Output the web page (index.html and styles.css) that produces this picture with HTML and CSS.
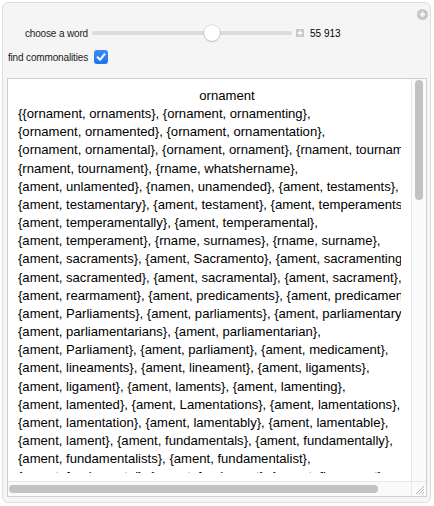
FILE: index.html
```html
<!DOCTYPE html>
<html lang="en">
<head>
    <meta charset="UTF-8">
    <meta name="viewport" content="width=device-width, initial-scale=1.0">
    <title>Word commonalities</title>
    <link rel="stylesheet" href="styles.css">
</head>
<body>
    <div class="panel">
        <span class="add-btn">
            <svg width="11" height="11" viewBox="0 0 11 11"><circle cx="5.5" cy="5.5" r="5.5" fill="#c6c6c6"/><path d="M5.5 2.8v5.4M2.8 5.5h5.4" stroke="#fff" stroke-width="1.6"/></svg>
        </span>

        <div class="controls">
            <label class="ctl-label">choose a word</label>
            <div class="ctl">
                <div class="slider">
                    <div class="track"></div>
                    <div class="thumb" style="left: 112px"></div>
                </div>
                <span class="step-btn">
                    <svg width="8" height="8" viewBox="0 0 8 8"><rect width="8" height="8" fill="#c9c9c9"/><path d="M4 1.5v5M1.5 4h5" stroke="#fff" stroke-width="1.3"/></svg>
                </span>
                <span class="value">55 913</span>
            </div>

            <label class="ctl-label">find commonalities</label>
            <div class="ctl">
                <span class="checkbox">
                    <svg width="14" height="14" viewBox="0 0 14 14"><path d="M3.6 7.3l2.4 2.5 4.6-5.6" fill="none" stroke="#fff" stroke-width="2" stroke-linecap="round" stroke-linejoin="round"/></svg>
                </span>
            </div>
        </div>

        <div class="pane">
            <div class="pane-body">
                <div class="view">
                    <div class="clip">
                        <div class="content">
                            <div class="title">ornament</div>
                            <div class="line">{{ornament, ornaments}, {ornament, ornamenting},</div>
                            <div class="line">{ornament, ornamented}, {ornament, ornamentation},</div>
                            <div class="line">{ornament, ornamental}, {ornament, ornament}, {rnament, tournament},</div>
                            <div class="line">{rnament, tournament}, {rname, whatshername},</div>
                            <div class="line">{ament, unlamented}, {namen, unamended}, {ament, testaments},</div>
                            <div class="line">{ament, testamentary}, {ament, testament}, {ament, temperaments},</div>
                            <div class="line">{ament, temperamentally}, {ament, temperamental},</div>
                            <div class="line">{ament, temperament}, {rname, surnames}, {rname, surname},</div>
                            <div class="line">{ament, sacraments}, {ament, Sacramento}, {ament, sacramenting},</div>
                            <div class="line">{ament, sacramented}, {ament, sacramental}, {ament, sacrament},</div>
                            <div class="line">{ament, rearmament}, {ament, predicaments}, {ament, predicament},</div>
                            <div class="line">{ament, Parliaments}, {ament, parliaments}, {ament, parliamentary},</div>
                            <div class="line">{ament, parliamentarians}, {ament, parliamentarian},</div>
                            <div class="line">{ament, Parliament}, {ament, parliament}, {ament, medicament},</div>
                            <div class="line">{ament, lineaments}, {ament, lineament}, {ament, ligaments},</div>
                            <div class="line">{ament, ligament}, {ament, laments}, {ament, lamenting},</div>
                            <div class="line">{ament, lamented}, {ament, Lamentations}, {ament, lamentations},</div>
                            <div class="line">{ament, lamentation}, {ament, lamentably}, {ament, lamentable},</div>
                            <div class="line">{ament, lament}, {ament, fundamentals}, {ament, fundamentally},</div>
                            <div class="line">{ament, fundamentalists}, {ament, fundamentalist},</div>
                            <div class="line">{ament, fundamental}, {ament, fundament}, {ament, firmament},</div>
                        </div>
                    </div>
                </div>
                <div class="vscroll"><div class="vthumb"></div></div>
            </div>
            <div class="hbar">
                <div class="hscroll"><div class="hthumb"></div></div>
                <div class="grip">
                    <svg width="14" height="14" viewBox="0 0 14 14"><path d="M12 4L4 12M12 7L7 12M12 10L10 12" stroke="#b5b5b5" stroke-width="1"/></svg>
                </div>
            </div>
        </div>
    </div>
</body>
</html>
```

FILE: styles.css
```css
body {
    margin: 0;
    background-color: #fff;
    font-family: "Liberation Sans", Arial, sans-serif;
    color: #000;
}
.panel {
    position: relative;
    box-sizing: border-box;
    width: 429px;
    height: 501px;
    margin: 2px 0 0 2px;
    padding: 20px 3px 5px 4px;
    display: flex;
    flex-direction: column;
    background-color: #f5f5f5;
    border: 1px solid #dedede;
    border-radius: 6px;
}
.add-btn {
    position: absolute;
    top: 6px;
    right: 2px;
    display: flex;
}

/* controls */
.controls {
    display: grid;
    grid-template-columns: 83px 1fr;
    grid-auto-rows: 20px;
    row-gap: 4px;
    column-gap: 4px;
    margin-left: -2px;
    font-size: 10px;
}
.ctl-label {
    display: flex;
    align-items: center;
    justify-content: flex-end;
    white-space: nowrap;
    letter-spacing: -0.15px;
    color: #222;
}
.ctl {
    display: flex;
    align-items: center;
}
.slider {
    position: relative;
    width: 200px;
    height: 20px;
}
.track {
    position: absolute;
    left: 0;
    right: 0;
    top: 8px;
    height: 4px;
    border-radius: 2px;
    background-color: #dcdcdc;
}
.thumb {
    position: absolute;
    top: 2px;
    width: 16px;
    height: 16px;
    border-radius: 50%;
    background-color: #fff;
    box-shadow: 0 0 0 0.5px rgba(0, 0, 0, 0.15), 0 1px 2px rgba(0, 0, 0, 0.2);
}
.step-btn {
    display: flex;
    margin-left: 4px;
}
.value {
    margin-left: 6px;
    font-size: 10px;
}
.checkbox {
    display: flex;
    width: 14px;
    height: 14px;
    margin-left: 2px;
    border-radius: 3px;
    background: linear-gradient(#3a8cfb, #1a73f0);
}

/* output pane */
.pane {
    flex: 1;
    display: flex;
    flex-direction: column;
    margin-top: 11px;
    background-color: #fff;
    border: 1px solid #cfcfcf;
    min-height: 0;
}
.pane-body {
    flex: 1;
    display: flex;
    min-height: 0;
}
.view {
    flex: 1;
    display: flex;
    flex-direction: column;
    padding: 8px 10px 8px 10px;
    min-width: 0;
}
.clip {
    flex: 1;
    overflow: hidden;
    min-height: 0;
}
.content {
    width: 418px;
    font-size: 13.1px;
    line-height: 18.15px;
}
.title {
    text-align: center;
}
.line {
    white-space: nowrap;
}
.vscroll {
    width: 14px;
    display: flex;
    justify-content: center;
    padding-top: 1px;
    background-color: #fafafa;
    border-left: 1px solid #e8e8e8;
}
.vthumb {
    width: 8px;
    height: 120px;
    border-radius: 4px;
    background-color: #c2c2c2;
}
.hbar {
    display: flex;
    height: 14px;
    background-color: #fafafa;
    border-top: 1px solid #e8e8e8;
}
.hscroll {
    flex: 1;
    display: flex;
    align-items: center;
    padding-left: 1px;
}
.hthumb {
    width: 369px;
    height: 8px;
    border-radius: 4px;
    background-color: #c2c2c2;
}
.grip {
    width: 14px;
    display: flex;
    border-left: 1px solid #e8e8e8;
}
```
